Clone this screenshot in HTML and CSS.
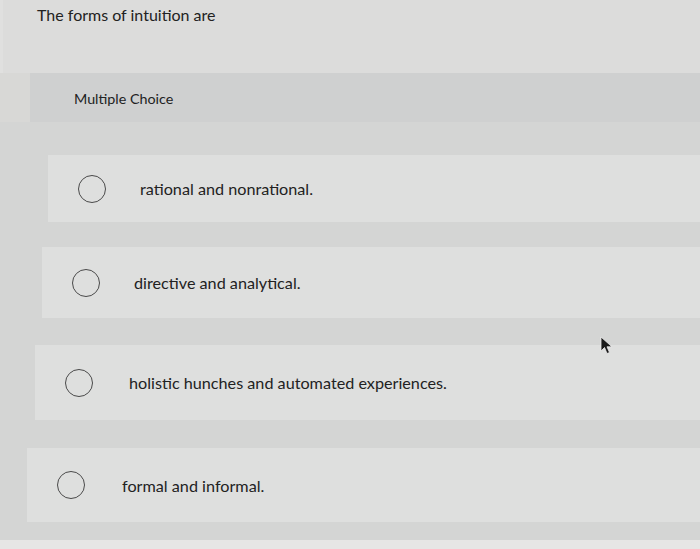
FILE: index.html
```html
<!DOCTYPE html>
<html>
<head>
<meta charset="utf-8">
<link rel="stylesheet" href="styles.css">
</head>
<body>
<div class="page">
  <div class="question">The forms of intuition are</div>
  <div class="panel">
    <div class="mc-header">Multiple Choice</div>
    <div class="options">
      <div class="option o1"><span class="radio"></span><span class="label">rational and nonrational.</span></div>
      <div class="option o2"><span class="radio"></span><span class="label">directive and analytical.</span></div>
      <div class="option o3"><span class="radio"></span><span class="label">holistic hunches and automated experiences.</span></div>
      <div class="option o4"><span class="radio"></span><span class="label">formal and informal.</span></div>
    </div>
  </div>
  <div class="bottom-strip"></div>
  <svg class="cursor" width="14" height="20" viewBox="0 0 14 20"><path d="M1 1 L1 15 L4.5 11.5 L7 17.5 L9.5 16.5 L7 10.8 L12 10.8 Z" fill="#1a1a1a" stroke="#eee" stroke-width="0.8"/></svg>
</div>
</body>
</html>
```
FILE: styles.css
```css
html, body {
  margin: 0;
  padding: 0;
}
body {
  background: #d9d9d7;
  font-family: Lato, "Open Sans", sans-serif;
  color: #222;
}
.page {
  position: relative;
  width: 700px;
  height: 549px;
  overflow: hidden;
  background: #d8d8d6;
}
.question {
  height: 73px;
  box-sizing: border-box;
  padding: 5px 0 0 34px;
  font-size: 16px;
  background: #dcdcdb;
  border-left: 3px solid #e0e0df;
}
.panel {
  margin-left: 30px;
}
.mc-header {
  height: 49px;
  display: flex;
  align-items: center;
  padding-left: 44px;
  font-size: 14.3px;
  background: #cfd0d0;
  box-sizing: border-box;
  padding-top: 2px;
}
.options {
  margin-left: -30px;
  padding-top: 33px;
  padding-bottom: 18px;
  display: flex;
  flex-direction: column;
  background: #d4d5d4;
}
.option {
  display: flex;
  align-items: center;
  padding-left: 30px;
  background: #dedfde;
  font-size: 16.2px;
}
.radio {
  width: 26px;
  height: 26px;
  border: 1.5px solid #4a4a4a;
  border-radius: 50%;
  flex: none;
}
.label {
  margin-left: 34px;
}
.o1 { margin-left: 48px; height: 67px; }
.o2 { margin-left: 42px; height: 71px; margin-top: 25px; }
.o3 { margin-left: 35px; height: 75px; margin-top: 27px; }
.o3 .label { margin-left: 36px; }
.o4 { margin-left: 27px; height: 74px; margin-top: 28px; }
.o4 .label { margin-left: 37px; }
.bottom-strip {
  height: 20px;
  background: #e6e6e5;
}
.cursor {
  position: absolute;
  left: 600px;
  top: 336px;
}
```
